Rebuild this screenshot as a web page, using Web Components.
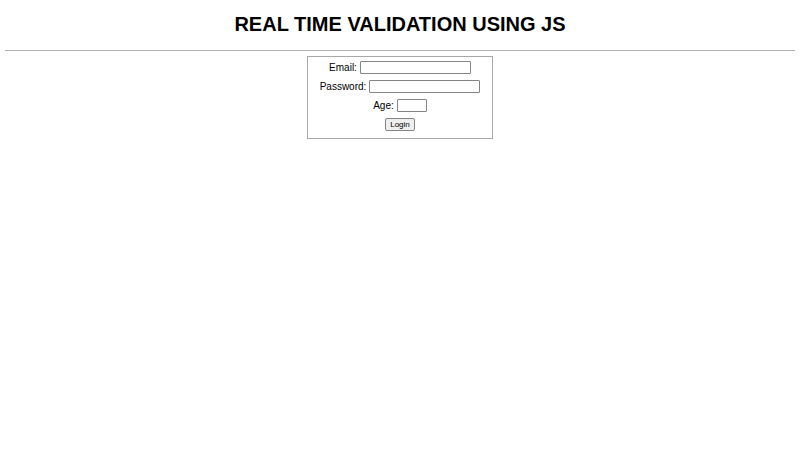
<!DOCTYPE html>
<html lang="en">
<head>
  <meta charset="UTF-8">
  <meta name="viewport" content="width=device-width, initial-scale=1.0">
  <title>Real time validation using JS</title>
  <style>
    body {
      margin: 5px;
      font-family: "Liberation Sans", Arial, sans-serif;
      font-size: 10px;
      color: #000;
      background: #fff;
    }
  </style>
</head>
<body>
  <page-header>REAL TIME VALIDATION USING JS</page-header>
  <login-form>
    <form-field label="Email" type="email" size="wide"></form-field>
    <form-field label="Password" type="password" size="wide"></form-field>
    <form-field label="Age" type="number"></form-field>
  </login-form>

  <script>
    class PageHeader extends HTMLElement {
      constructor() {
        super();
        this.attachShadow({ mode: "open" });
        this.shadowRoot.innerHTML = `
          <style>
            :host {
              display: block;
              text-align: center;
            }

            h1 {
              margin: 0;
              padding-block: 8px 14px;
              font-size: 20px;
              line-height: 23px;
            }

            hr {
              margin: 0;
              border: none;
              border-top: 1px solid #b0b0b0;
            }
          </style>
          <h1><slot></slot></h1>
          <hr>
        `;
      }
    }

    class FormField extends HTMLElement {
      constructor() {
        super();
        this.attachShadow({ mode: "open" });
        this.shadowRoot.innerHTML = `
          <style>
            :host {
              display: flex;
              justify-content: center;
              align-items: center;
              gap: 3px;
            }

            label {
              line-height: 13px;
            }

            input {
              box-sizing: border-box;
              width: 30px;
              height: 13px;
              margin: 0;
              padding: 1px;
              border: 1px solid #858585;
              border-radius: 1px;
              font-family: inherit;
              font-size: 8px;
              background: #fff;
            }

            :host([size="wide"]) input {
              width: 111px;
            }

            input:focus {
              outline: 1px solid #000;
            }

            input.invalid {
              border-color: #d00;
            }
          </style>
          <label for="field"></label>
          <input id="field">
        `;

        this.labelElement = this.shadowRoot.querySelector("label");
        this.input = this.shadowRoot.querySelector("input");

        this.input.addEventListener("input", () => this.validate());
      }

      connectedCallback() {
        this.labelElement.textContent = `${this.getAttribute("label")}:`;
        this.input.type = this.getAttribute("type") || "text";
        this.input.required = true;
      }

      validate() {
        const valid = this.input.checkValidity();
        this.input.classList.toggle("invalid", !valid);
        return valid;
      }
    }

    class LoginForm extends HTMLElement {
      constructor() {
        super();
        this.attachShadow({ mode: "open" });
        this.shadowRoot.innerHTML = `
          <style>
            :host {
              display: flex;
              justify-content: center;
              margin-top: 5px;
            }

            form {
              display: flex;
              flex-direction: column;
              gap: 6px;
              padding: 4px 12px 7px;
              border: 1px solid #a8a8a8;
            }

            button {
              align-self: center;
              box-sizing: border-box;
              height: 13px;
              padding: 0 4px;
              border: 1px solid #858585;
              border-radius: 2px;
              font-family: inherit;
              font-size: 8px;
              line-height: 11px;
              color: #000;
              background: #efefef;
            }

            button:hover {
              background: #e5e5e5;
            }
          </style>
          <form novalidate>
            <slot></slot>
            <button type="submit">Login</button>
          </form>
        `;

        this.shadowRoot.querySelector("form").addEventListener("submit", (event) => {
          event.preventDefault();
          this.querySelectorAll("form-field").forEach((field) => field.validate());
        });
      }
    }

    customElements.define("page-header", PageHeader);
    customElements.define("form-field", FormField);
    customElements.define("login-form", LoginForm);
  </script>
</body>
</html>
